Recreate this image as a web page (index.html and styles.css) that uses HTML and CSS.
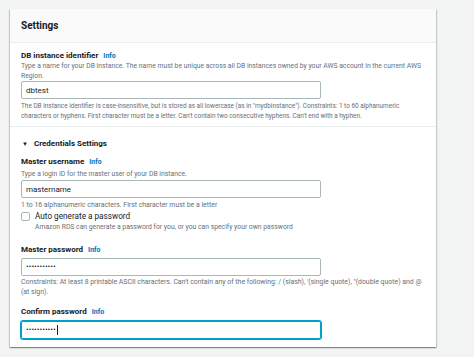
FILE: index.html
```html
<!DOCTYPE html>
<html>
<head>
<meta charset="utf-8">
<link rel="stylesheet" href="styles.css">
</head>
<body>
<div class="card">
  <div class="card-header"><h2 class="title">Settings</h2></div>
  <div class="section section-first">
    <div class="label">DB instance identifier <span class="info">Info</span></div>
    <div class="desc">Type a name for your DB instance. The name must be unique across all DB instances owned by your AWS account in the current AWS Region.</div>
    <div class="input"><span class="value">dbtest</span></div>
    <div class="hint hint-id">The DB instance identifier is case-insensitive, but is stored as all lowercase (as in "mydbinstance"). Constraints: 1 to 60 alphanumeric characters or hyphens. First character must be a letter. Can't contain two consecutive hyphens. Can't end with a hyphen.</div>
  </div>
  <div class="section section-second">
    <div class="expander"><span class="caret">&#9660;</span>Credentials Settings</div>
    <div class="label label-mu">Master username <span class="info">Info</span></div>
    <div class="desc desc-mu">Type a login ID for the master user of your DB instance.</div>
    <div class="input input-mu"><span class="value">mastername</span></div>
    <div class="hint">1 to 16 alphanumeric characters. First character must be a letter</div>
    <div class="check-row">
      <span class="checkbox"></span>
      <div class="check-text">
        <div class="check-label">Auto generate a password</div>
        <div class="desc desc-check">Amazon RDS can generate a password for you, or you can specify your own password</div>
      </div>
    </div>
    <div class="label label-mp">Master password <span class="info">Info</span></div>
    <div class="input input-pw"><span class="dots">•••••••••••</span></div>
    <div class="hint hint-pw">Constraints: At least 8 printable ASCII characters. Can't contain any of the following: / (slash), '(single quote), "(double quote) and @ (at sign).</div>
    <div class="label label-cp">Confirm password <span class="info">Info</span></div>
    <div class="input input-pw input-focus"><span class="dots">•••••••••••</span><span class="cursor"></span></div>
  </div>
</div>
</body>
</html>
```
FILE: styles.css
```css
html, body {
  margin: 0;
  padding: 0;
}
body {
  background: #f2f3f3;
  font-family: Roboto, "Open Sans", sans-serif;
  color: #16191f;
  width: 474px;
  height: 357px;
  overflow: hidden;
}
.card {
  margin: 9px 0 0 10px;
  width: 426px;
  height: 338px;
  background: #ffffff;
  box-shadow: 0 1px 1px 0 rgba(0, 28, 36, 0.3), 1px 1px 1px 0 rgba(0, 28, 36, 0.15), -1px 1px 1px 0 rgba(0, 28, 36, 0.15);
  display: flex;
  flex-direction: column;
}
.card-header {
  flex-shrink: 0;
  height: 34px;
  box-sizing: border-box;
  background: #fafafa;
  border-bottom: 1px solid #eaeded;
  display: flex;
  align-items: center;
  padding: 0 11px;
}
.title {
  margin: 0;
  font-size: 10px;
  font-weight: 700;
  color: #16191f;
}
.section {
  flex-shrink: 0;
  padding: 0 11px;
  display: flex;
  flex-direction: column;
  align-items: flex-start;
}
.section-first {
  padding-top: 8px;
  padding-bottom: 5px;
  border-bottom: 1px solid #eaeded;
}
.section-second {
  padding-top: 11px;
}
.label {
  font-size: 8px;
  font-weight: 700;
  line-height: 10px;
  color: #16191f;
  white-space: nowrap;
}
.info {
  color: #0073bb;
  font-size: 7px;
  font-weight: 700;
  margin-left: 3px;
}
.desc {
  font-size: 6.8px;
  line-height: 10px;
  color: #687078;
}
.hint {
  font-size: 6.9px;
  line-height: 10px;
  color: #687078;
  margin-top: 2px;
}
.hint-id {
  font-size: 6.45px;
}
.input {
  width: 300px;
  height: 18px;
  box-sizing: border-box;
  border: 1px solid #aab7b8;
  border-radius: 2px;
  display: flex;
  align-items: center;
  padding: 0 4px;
}
.value {
  font-size: 8px;
  color: #16191f;
}
.desc-mu {
  margin-top: 2px;
}
.input-mu {
  margin-top: 1px;
}
.input-pw {
  margin-top: 3px;
}
.hint-pw {
  margin-top: 1px;
}
.dots {
  font-size: 8px;
  letter-spacing: 0;
  line-height: 10px;
  color: #16191f;
}
.input-focus {
  margin-top: 4px;
  border-color: #00a1c9;
  box-shadow: 0 0 0 1px #00a1c9;
}
.cursor {
  width: 1px;
  height: 10px;
  background: #16191f;
  margin-left: 1px;
}
.expander {
  font-size: 8px;
  font-weight: 700;
  line-height: 12px;
  color: #16191f;
  display: flex;
  align-items: center;
}
.caret {
  font-size: 6px;
  margin: 0 6px 0 1px;
}
.label-mu {
  margin-top: 7px;
}
.check-row {
  display: flex;
  align-items: flex-start;
  margin-top: 1px;
}
.checkbox {
  width: 9px;
  height: 9px;
  box-sizing: border-box;
  border: 1px solid #aab7b8;
  border-radius: 2px;
  margin-top: 1px;
  margin-right: 5px;
  background: #fff;
}
.check-label {
  font-size: 8.2px;
  line-height: 10px;
  color: #16191f;
}
.desc-check {
  margin-top: 1px;
}
.label-mp {
  margin-top: 13px;
}
.label-cp {
  margin-top: 10px;
}
```
